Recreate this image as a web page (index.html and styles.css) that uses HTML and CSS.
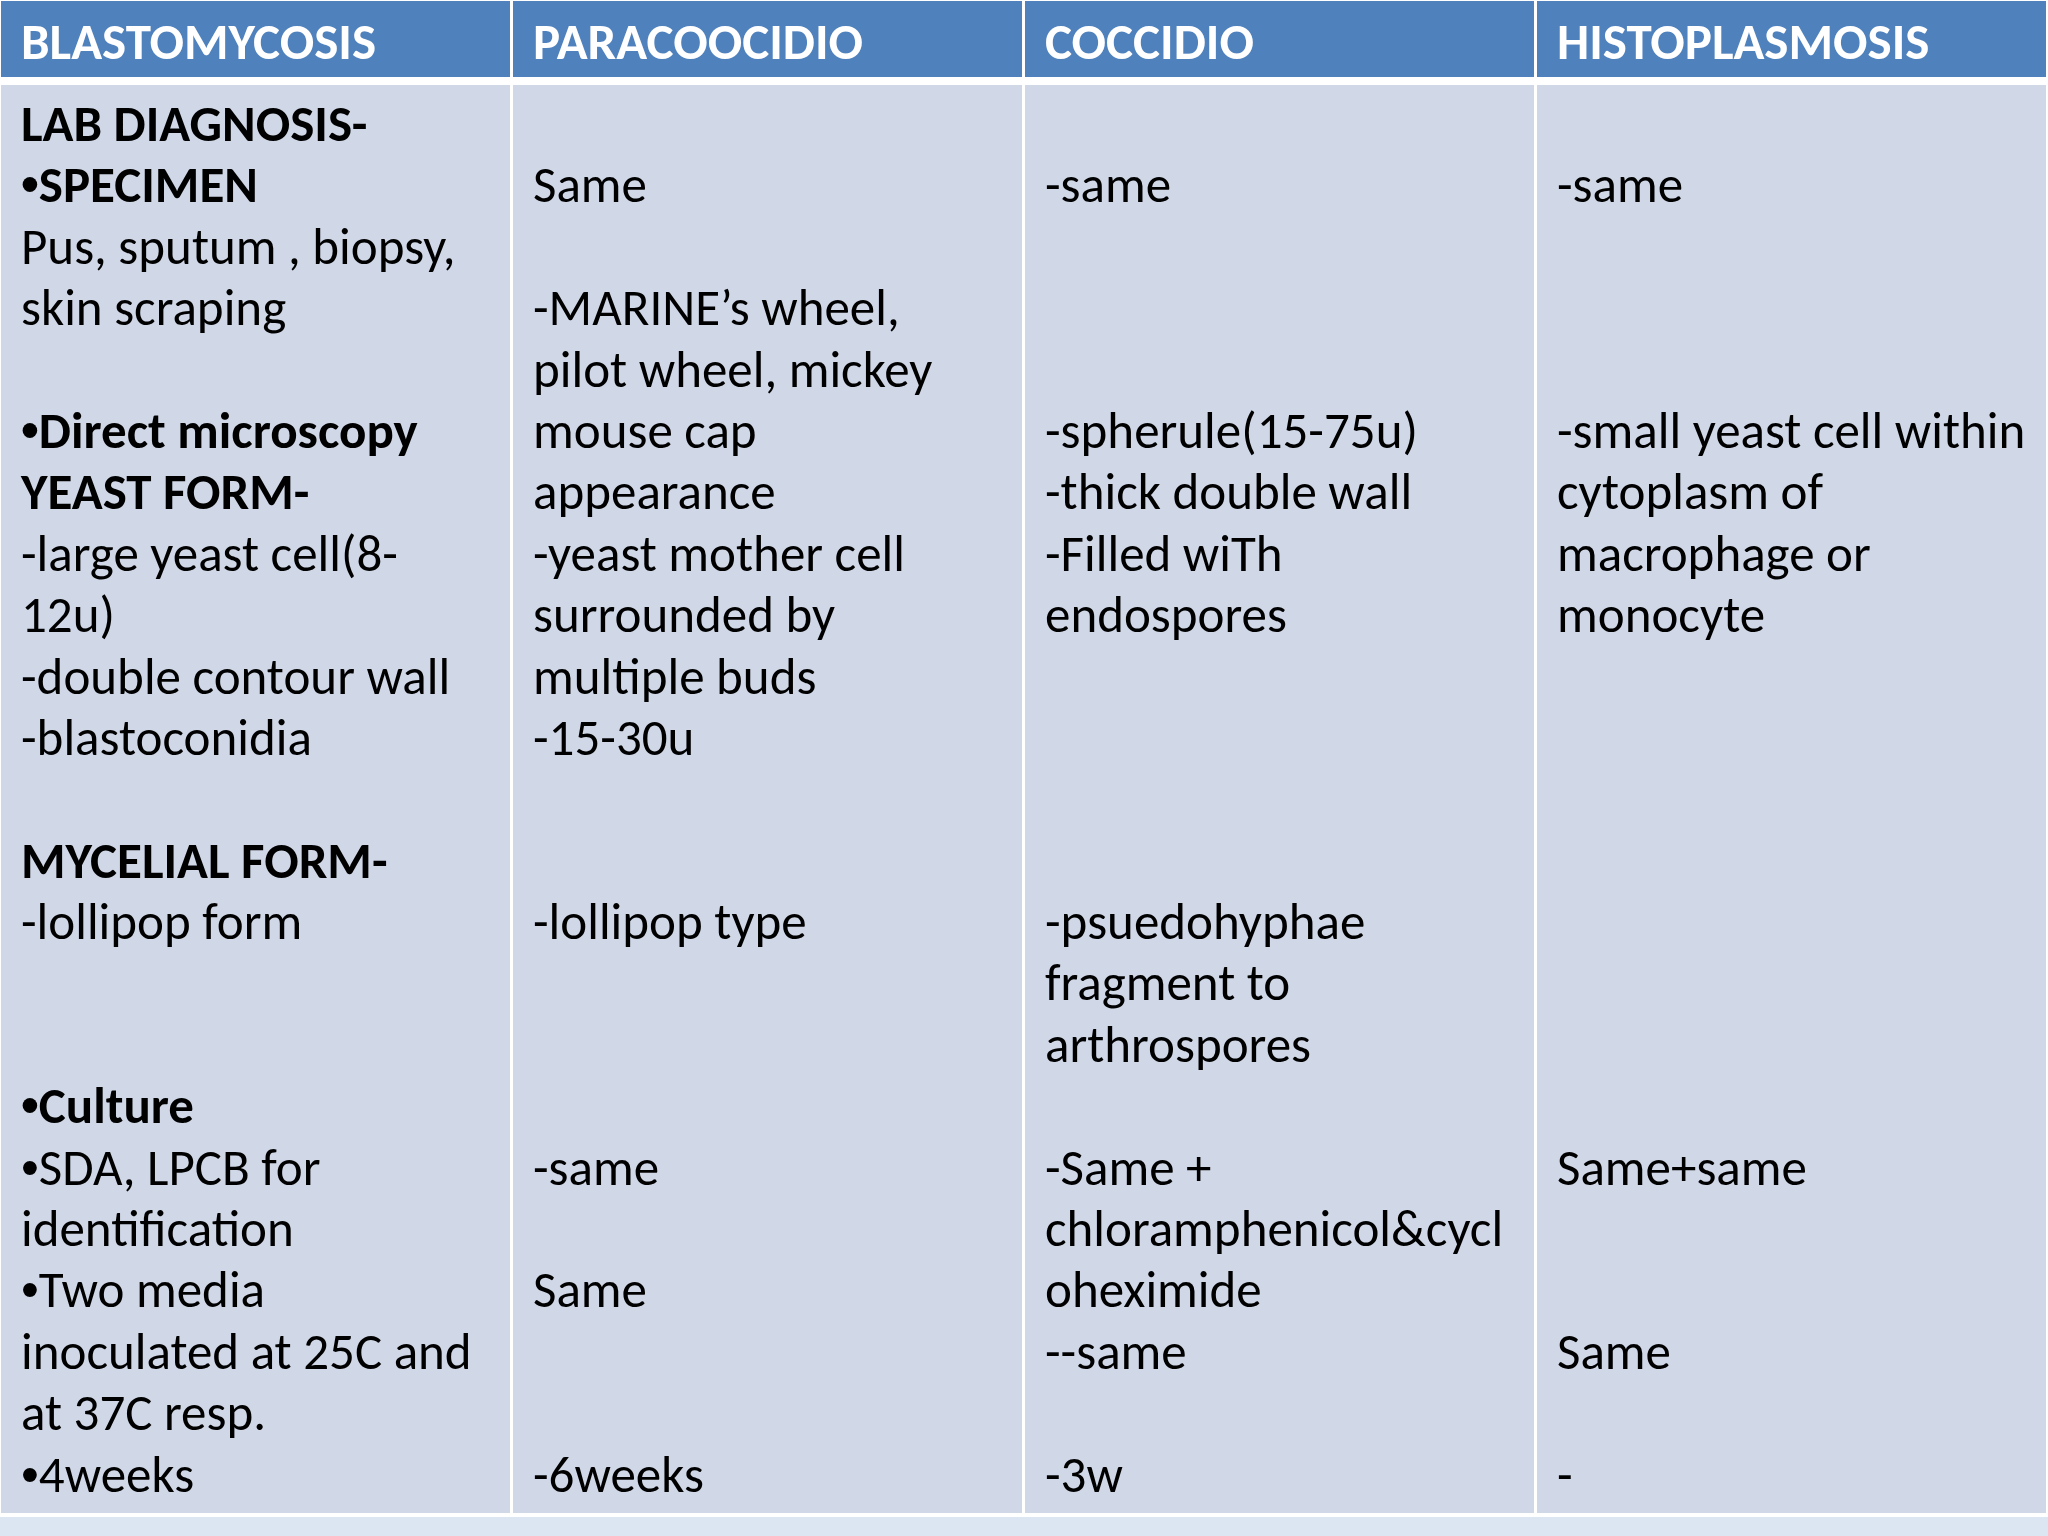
FILE: index.html
```html
<!DOCTYPE html>
<html>
<head>
<meta charset="utf-8">
<link rel="stylesheet" href="styles.css">
</head>
<body>
<div class="page">
  <div class="table">
    <div class="th">BLASTOMYCOSIS</div>
    <div class="th">PARACOOCIDIO</div>
    <div class="th">COCCIDIO</div>
    <div class="th">HISTOPLASMOSIS</div>

    <div class="td">
      <div class="ln b">LAB DIAGNOSIS-</div>
      <div class="ln b"><span class="bu">•</span>SPECIMEN</div>
      <div class="ln">Pus, sputum , biopsy,</div>
      <div class="ln">skin scraping</div>
      <div class="ln"></div>
      <div class="ln b"><span class="bu">•</span>Direct microscopy</div>
      <div class="ln b">YEAST FORM-</div>
      <div class="ln">-large yeast cell(8-</div>
      <div class="ln">12u)</div>
      <div class="ln">-double contour wall</div>
      <div class="ln">-blastoconidia</div>
      <div class="ln"></div>
      <div class="ln b">MYCELIAL FORM-</div>
      <div class="ln">-lollipop form</div>
      <div class="ln"></div>
      <div class="ln"></div>
      <div class="ln b"><span class="bu">•</span>Culture</div>
      <div class="ln"><span class="bu">•</span>SDA, LPCB for</div>
      <div class="ln">identification</div>
      <div class="ln"><span class="bu">•</span>Two media</div>
      <div class="ln">inoculated at 25C and</div>
      <div class="ln">at 37C resp.</div>
      <div class="ln"><span class="bu">•</span>4weeks</div>
    </div>

    <div class="td">
      <div class="ln"></div>
      <div class="ln">Same</div>
      <div class="ln"></div>
      <div class="ln">-MARINE’s wheel,</div>
      <div class="ln">pilot wheel, mickey</div>
      <div class="ln">mouse cap</div>
      <div class="ln">appearance</div>
      <div class="ln">-yeast mother cell</div>
      <div class="ln">surrounded by</div>
      <div class="ln">multiple buds</div>
      <div class="ln">-15-30u</div>
      <div class="ln"></div>
      <div class="ln"></div>
      <div class="ln">-lollipop type</div>
      <div class="ln"></div>
      <div class="ln"></div>
      <div class="ln"></div>
      <div class="ln">-same</div>
      <div class="ln"></div>
      <div class="ln">Same</div>
      <div class="ln"></div>
      <div class="ln"></div>
      <div class="ln">-6weeks</div>
    </div>

    <div class="td">
      <div class="ln"></div>
      <div class="ln">-same</div>
      <div class="ln"></div>
      <div class="ln"></div>
      <div class="ln"></div>
      <div class="ln">-spherule(15-75u)</div>
      <div class="ln">-thick double wall</div>
      <div class="ln">-Filled wiTh</div>
      <div class="ln">endospores</div>
      <div class="ln"></div>
      <div class="ln"></div>
      <div class="ln"></div>
      <div class="ln"></div>
      <div class="ln">-psuedohyphae</div>
      <div class="ln">fragment to</div>
      <div class="ln">arthrospores</div>
      <div class="ln"></div>
      <div class="ln">-Same +</div>
      <div class="ln">chloramphenicol&amp;cycl</div>
      <div class="ln">oheximide</div>
      <div class="ln">--same</div>
      <div class="ln"></div>
      <div class="ln">-3w</div>
    </div>

    <div class="td">
      <div class="ln"></div>
      <div class="ln">-same</div>
      <div class="ln"></div>
      <div class="ln"></div>
      <div class="ln"></div>
      <div class="ln">-small yeast cell within</div>
      <div class="ln">cytoplasm of</div>
      <div class="ln">macrophage or</div>
      <div class="ln">monocyte</div>
      <div class="ln"></div>
      <div class="ln"></div>
      <div class="ln"></div>
      <div class="ln"></div>
      <div class="ln"></div>
      <div class="ln"></div>
      <div class="ln"></div>
      <div class="ln"></div>
      <div class="ln">Same+same</div>
      <div class="ln"></div>
      <div class="ln"></div>
      <div class="ln">Same</div>
      <div class="ln"></div>
      <div class="ln">-</div>
    </div>
  </div>
  <div class="strip"></div>
</div>
</body>
</html>
```

FILE: styles.css
```css
html, body {
  margin: 0;
  padding: 0;
  background: #ffffff;
}

.page {
  width: 2048px;
  height: 1536px;
  display: flex;
  flex-direction: column;
  background: #ffffff;
  font-family: "Carlito", "Lato", "Liberation Sans", sans-serif;
  color: #000000;
  overflow: hidden;
}

.table {
  display: grid;
  grid-template-columns: repeat(4, 1fr);
  grid-template-rows: 76px 1428px;
  column-gap: 3px;
  row-gap: 8px;
  padding: 1px 2px 0 1px;
}

.th {
  background: #4f81bd;
  color: #ffffff;
  font-weight: 700;
  font-size: 51px;
  padding-left: 20px;
  display: flex;
  align-items: center;
  padding-top: 4px;
  white-space: nowrap;
}

.td {
  background: #d0d8e8;
  padding: 8px 0 0 20px;
  font-size: 51px;
  line-height: 61.4px;
}

.ln {
  height: 61.4px;
  white-space: nowrap;
}

.b {
  font-weight: 700;
}

.bu {
  font-family: "Liberation Sans", sans-serif;
  font-weight: 400;
  font-size: 1em;
}

.b .bu {
  font-weight: 700;
}

.strip {
  margin-top: 4px;
  flex: 1;
  background: #dce6f2;
}
```
